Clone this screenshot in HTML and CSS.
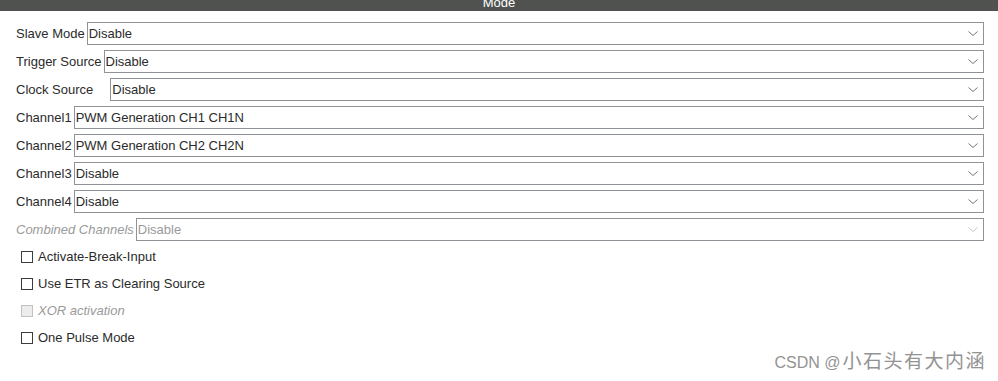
FILE: index.html
```html
<!DOCTYPE html>
<html lang="en">
<head>
    <meta charset="UTF-8">
    <title>Mode</title>
    <link rel="stylesheet" href="styles.css">
</head>
<body>
    <div class="panel">
        <div class="panel-header">
            <span class="panel-title">Mode</span>
        </div>

        <div class="form">
            <div class="row">
                <label class="row-label">Slave Mode</label>
                <div class="combo"><span class="combo-value">Disable</span><svg class="chevron" viewBox="0 0 10 5"><path d="M0.5 0.5L5 4.5L9.5 0.5"/></svg></div>
            </div>
            <div class="row">
                <label class="row-label">Trigger Source</label>
                <div class="combo"><span class="combo-value">Disable</span><svg class="chevron" viewBox="0 0 10 5"><path d="M0.5 0.5L5 4.5L9.5 0.5"/></svg></div>
            </div>
            <div class="row">
                <label class="row-label row-label-wide">Clock Source</label>
                <div class="combo"><span class="combo-value">Disable</span><svg class="chevron" viewBox="0 0 10 5"><path d="M0.5 0.5L5 4.5L9.5 0.5"/></svg></div>
            </div>
            <div class="row">
                <label class="row-label">Channel1</label>
                <div class="combo"><span class="combo-value">PWM Generation CH1 CH1N</span><svg class="chevron" viewBox="0 0 10 5"><path d="M0.5 0.5L5 4.5L9.5 0.5"/></svg></div>
            </div>
            <div class="row">
                <label class="row-label">Channel2</label>
                <div class="combo"><span class="combo-value">PWM Generation CH2 CH2N</span><svg class="chevron" viewBox="0 0 10 5"><path d="M0.5 0.5L5 4.5L9.5 0.5"/></svg></div>
            </div>
            <div class="row">
                <label class="row-label">Channel3</label>
                <div class="combo"><span class="combo-value">Disable</span><svg class="chevron" viewBox="0 0 10 5"><path d="M0.5 0.5L5 4.5L9.5 0.5"/></svg></div>
            </div>
            <div class="row">
                <label class="row-label">Channel4</label>
                <div class="combo"><span class="combo-value">Disable</span><svg class="chevron" viewBox="0 0 10 5"><path d="M0.5 0.5L5 4.5L9.5 0.5"/></svg></div>
            </div>
            <div class="row disabled">
                <label class="row-label">Combined Channels</label>
                <div class="combo"><span class="combo-value">Disable</span><svg class="chevron" viewBox="0 0 10 5"><path d="M0.5 0.5L5 4.5L9.5 0.5"/></svg></div>
            </div>
        </div>

        <div class="checks">
            <div class="check"><span class="box"></span><span class="check-label">Activate-Break-Input</span></div>
            <div class="check"><span class="box"></span><span class="check-label">Use ETR as Clearing Source</span></div>
            <div class="check disabled"><span class="box"></span><span class="check-label">XOR activation</span></div>
            <div class="check"><span class="box"></span><span class="check-label">One Pulse Mode</span></div>
        </div>
    </div>

    <div class="watermark"><span class="wm-latin">CSDN @</span><span class="wm-cjk">小石头有大内涵</span></div>
</body>
</html>
```

FILE: styles.css
```css
:root {
    --header-color: #505250;
    --border-color: #8f9398;
    --text-color: #2b2b2b;
    --text-disabled: #9a9a9a;
}

* {
    margin: 0;
    padding: 0;
    box-sizing: border-box;
}

body {
    background-color: #ffffff;
    font-family: 'Liberation Sans', Arial, sans-serif;
    font-size: 13px;
    color: var(--text-color);
    width: 998px;
    height: 381px;
    position: relative;
    overflow: hidden;
}

.panel-header {
    height: 11px;
    background-color: var(--header-color);
    overflow: hidden;
    display: flex;
    justify-content: center;
}

.panel-title {
    color: #ffffff;
    font-size: 13px;
    line-height: 15px;
    margin-top: -5px;
}

.form {
    padding: 11px 14px 0 16px;
    display: flex;
    flex-direction: column;
    gap: 5px;
}

.row {
    display: flex;
    align-items: center;
    height: 23px;
}

.row-label {
    white-space: nowrap;
    margin-right: 2px;
}

.row-label-wide {
    margin-right: 17px;
}

.combo {
    flex: 1;
    height: 23px;
    border: 1px solid var(--border-color);
    display: flex;
    align-items: center;
    padding: 0 5px 0 1px;
}

.combo-value {
    flex: 1;
}

.chevron {
    width: 10px;
    height: 5px;
    fill: none;
    stroke: #6f7376;
    stroke-width: 1;
}

.row.disabled .row-label {
    font-style: italic;
    color: var(--text-disabled);
}

.row.disabled .combo-value {
    color: var(--text-disabled);
}

.row.disabled .chevron {
    stroke: #c0c3c6;
}

.checks {
    padding: 2px 0 0 21px;
    display: flex;
    flex-direction: column;
}

.check {
    height: 27px;
    display: flex;
    align-items: center;
}

.box {
    width: 12px;
    height: 12px;
    border: 1px solid #3c3c3c;
    background-color: #ffffff;
    margin-right: 5px;
}

.check.disabled .box {
    border-color: #c2c2c2;
    background-color: #ececec;
}

.check.disabled .check-label {
    font-style: italic;
    color: var(--text-disabled);
}

.watermark {
    position: absolute;
    right: 12px;
    bottom: 8px;
    color: #939393;
    display: flex;
    align-items: baseline;
    text-shadow: 1px 1px 0 rgba(255, 255, 255, 0.7);
}

.wm-latin {
    font-size: 16px;
    margin-right: 2px;
}

.wm-cjk {
    font-family: 'Noto Sans CJK SC', sans-serif;
    font-size: 19px;
    letter-spacing: 1.5px;
}
```
